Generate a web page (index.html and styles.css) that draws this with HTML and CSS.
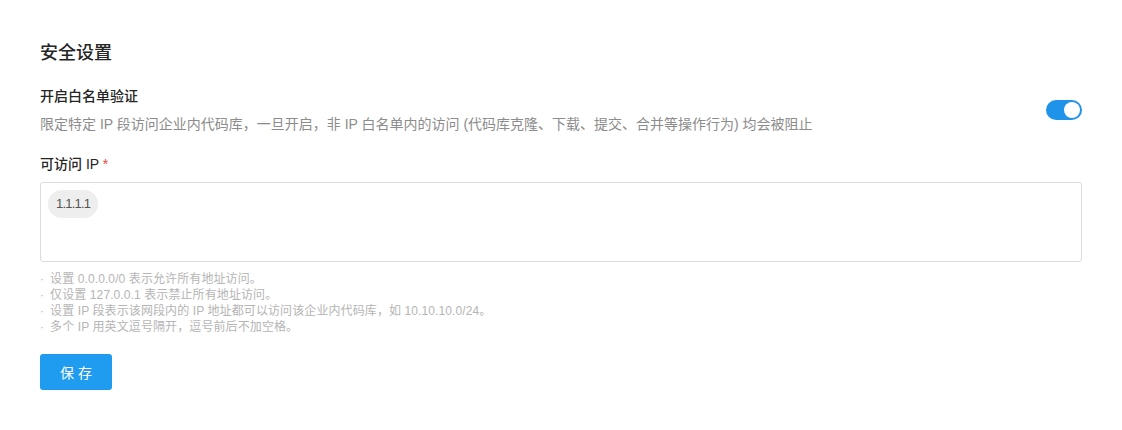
FILE: index.html
```html
<!DOCTYPE html>
<html>

<head>
    <title>安全设置</title>
    <link rel="stylesheet" href="styles.css">
</head>

<body>
    <div class="container">
        <h1 class="page-title">安全设置</h1>

        <div class="setting-row">
            <div class="setting-text">
                <div class="setting-label">开启白名单验证</div>
                <p class="setting-desc">限定特定 IP 段访问企业内代码库，一旦开启，非 IP 白名单内的访问 (代码库克隆、下载、提交、合并等操作行为) 均会被阻止</p>
            </div>
            <span class="switch switch-on"><span class="switch-knob"></span></span>
        </div>

        <div class="field-label">可访问 IP <span class="required">*</span></div>
        <div class="ip-box">
            <span class="ip-tag">1.1.1.1</span>
        </div>
        <ul class="hints">
            <li>设置 0.0.0.0/0 表示允许所有地址访问。</li>
            <li>仅设置 127.0.0.1 表示禁止所有地址访问。</li>
            <li>设置 IP 段表示该网段内的 IP 地址都可以访问该企业内代码库，如 10.10.10.0/24。</li>
            <li>多个 IP 用英文逗号隔开，逗号前后不加空格。</li>
        </ul>

        <button class="btn-primary" type="button">保 存</button>
    </div>
</body>

</html>
```

FILE: styles.css
```css
body {
    font-family: "Liberation Sans", "Noto Sans CJK SC", sans-serif;
    margin: 0;
    padding: 0;
    background-color: #fff;
    color: #252525;
}

.container {
    padding: 40px 40px 0 40px;
}

.page-title {
    font-size: 18px;
    font-weight: 500;
    line-height: 26px;
    margin: 0 0 19px 0;
    color: #252525;
}

.setting-row {
    display: flex;
    align-items: center;
    justify-content: space-between;
}

.setting-label {
    font-size: 14px;
    font-weight: 500;
    line-height: 22px;
}

.setting-desc {
    margin: 6px 0 0 0;
    font-size: 14px;
    line-height: 22px;
    color: #8c8c8c;
}

.switch {
    display: inline-block;
    position: relative;
    width: 36px;
    height: 20px;
    border-radius: 10px;
    background-color: #c8c8c8;
}

.switch-on {
    background-color: #1f93ea;
}

.switch-knob {
    position: absolute;
    top: 2px;
    right: 2px;
    width: 16px;
    height: 16px;
    border-radius: 50%;
    background-color: #fff;
}

.field-label {
    margin-top: 18px;
    font-size: 14px;
    font-weight: 500;
    line-height: 22px;
}

.required {
    color: #e5483f;
    font-weight: 400;
}

.ip-box {
    margin-top: 7px;
    height: 80px;
    box-sizing: border-box;
    border: 1px solid #dcdcdc;
    border-radius: 3px;
    padding: 7px;
}

.ip-tag {
    display: inline-block;
    height: 28px;
    line-height: 28px;
    padding: 0 8px;
    border-radius: 14px;
    background-color: #eeeeee;
    font-size: 13px;
    letter-spacing: -0.8px;
    color: #555;
}

.hints {
    list-style: none;
    margin: 9px 0 0 0;
    padding: 0;
    font-size: 12px;
    line-height: 16px;
    letter-spacing: 0.1px;
    color: #b5b5b5;
}

.hints li::before {
    content: "·";
    margin-right: 6px;
}

.btn-primary {
    margin-top: 19px;
    width: 72px;
    height: 36px;
    border: none;
    border-radius: 3px;
    background-color: #1f9bef;
    color: #fff;
    font-family: inherit;
    font-size: 14px;
    cursor: pointer;
}
```
